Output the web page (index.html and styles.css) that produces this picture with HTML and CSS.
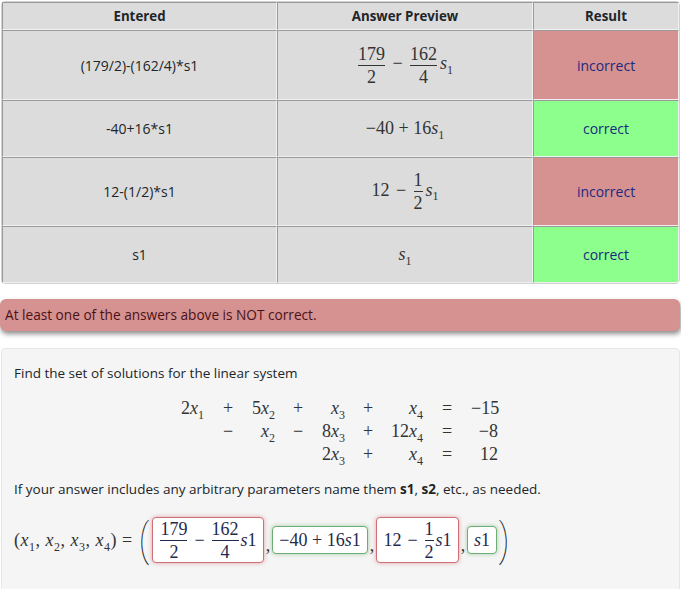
FILE: index.html
```html
<!DOCTYPE html>
<html lang="en">

<head>
  <meta charset="UTF-8" />
  <title>Attempt Results</title>
  <link rel="stylesheet" href="styles.css">
</head>

<body>
  <table class="results">
    <colgroup>
      <col class="col-entered">
      <col class="col-preview">
      <col class="col-result">
    </colgroup>
    <tr class="row-head">
      <th>Entered</th>
      <th>Answer Preview</th>
      <th>Result</th>
    </tr>
    <tr class="row-tall">
      <td>(179/2)-(162/4)*s1</td>
      <td class="math">
        <span class="frac"><span>179</span><span>2</span></span>
        <span class="op">&minus;</span>
        <span class="frac"><span>162</span><span>4</span></span><i class="sym">s</i><sub>1</sub>
      </td>
      <td class="bad">incorrect</td>
    </tr>
    <tr class="row-short">
      <td>-40+16*s1</td>
      <td class="math">&minus;40 + 16<i>s</i><sub>1</sub></td>
      <td class="good">correct</td>
    </tr>
    <tr class="row-mid">
      <td>12-(1/2)*s1</td>
      <td class="math">12 <span class="op">&minus;</span>
        <span class="frac"><span>1</span><span>2</span></span><i class="sym">s</i><sub>1</sub>
      </td>
      <td class="bad">incorrect</td>
    </tr>
    <tr class="row-short">
      <td>s1</td>
      <td class="math"><i>s</i><sub>1</sub></td>
      <td class="good">correct</td>
    </tr>
  </table>

  <div class="alert">At least one of the answers above is NOT correct.</div>

  <div class="problem">
    <p class="intro">Find the set of solutions for the linear system</p>

    <div class="system">
      <span>2<i>x</i><sub>1</sub></span><span class="c">+</span><span>5<i>x</i><sub>2</sub></span><span class="c">+</span><span><i>x</i><sub>3</sub></span><span class="c">+</span><span><i>x</i><sub>4</sub></span><span class="c">=</span><span>&minus;15</span>
      <span></span><span class="c">&minus;</span><span><i>x</i><sub>2</sub></span><span class="c">&minus;</span><span>8<i>x</i><sub>3</sub></span><span class="c">+</span><span>12<i>x</i><sub>4</sub></span><span class="c">=</span><span>&minus;8</span>
      <span></span><span></span><span></span><span></span><span>2<i>x</i><sub>3</sub></span><span class="c">+</span><span><i>x</i><sub>4</sub></span><span class="c">=</span><span>12</span>
    </div>

    <p class="note">If your answer includes any arbitrary parameters name them <b>s1</b>, <b>s2</b>, etc., as needed.</p>

    <div class="answer">
      <span class="lhs">(<i>x</i><sub>1</sub>, <i>x</i><sub>2</sub>, <i>x</i><sub>3</sub>, <i>x</i><sub>4</sub>) =</span>
      <span class="paren">(</span>
      <span class="box box-bad box-wide">
        <span class="frac"><span>179</span><span>2</span></span>
        <span class="op">&minus;</span>
        <span class="frac"><span>162</span><span>4</span></span><span class="var"><i>s</i>1</span>
      </span>
      <span class="comma">,</span>
      <span class="box box-good box-line">&minus;40 + 16<i>s</i>1</span>
      <span class="comma">,</span>
      <span class="box box-bad box-mid">12<span class="op">&minus;</span><span class="frac"><span>1</span><span>2</span></span><span class="var"><i>s</i>1</span>
      </span>
      <span class="comma">,</span>
      <span class="box box-good box-one"><i>s</i>1</span>
      <span class="paren">)</span>
    </div>
  </div>
</body>

</html>
```

FILE: styles.css
```css
body {
  margin: 0;
  background-color: #fff;
  color: #212529;
  font-family: "Open Sans", sans-serif;
  font-size: 13.65px;
  overflow: hidden;
}

.results {
  width: 679px;
  margin: 1px 0 0 1px;
  table-layout: fixed;
  border-collapse: separate;
  border-spacing: 0;
  border: 1px solid #d0d0d0;
  border-radius: 4px;
  background-color: #fff;
  font-size: 14px;
}

.col-entered {
  width: 275px;
}

.col-preview {
  width: 256px;
}

.results th,
.results td {
  padding: 0;
  text-align: center;
  background-color: #dcdcdc;
  border: 1px solid;
  border-color: #9a9a9a #f0f0f0 #f0f0f0 #9a9a9a;
}

.results th {
  font-weight: 700;
  font-size: 13.3px;
  padding-bottom: 1px;
}

.row-head {
  height: 28px;
}

.row-tall {
  height: 70px;
}

.row-short {
  height: 57px;
}

.row-mid {
  height: 69px;
}

.results .bad {
  background-color: #d69191;
  color: #1b2a80;
}

.results .good {
  background-color: #8cff8c;
  color: #1b2a80;
}

.math,
.system,
.lhs,
.box,
.comma {
  font-family: "Liberation Serif", serif;
}

.results .math {
  font-size: 18px;
  color: #333;
}

.math sub,
.system sub,
.lhs sub {
  font-size: 12px;
  line-height: 0;
}

.frac {
  display: inline-flex;
  flex-direction: column;
  vertical-align: middle;
  text-align: center;
  line-height: 22px;
  margin: 0 1px;
}

.frac span:first-child {
  border-bottom: 1px solid currentColor;
}

.op {
  margin: 0 2px;
}

.sym {
  margin-left: 2px;
}

.alert {
  height: 32px;
  margin-top: 15px;
  padding-left: 5px;
  line-height: 32px;
  width: 675px;
  background-color: #d69191;
  color: #4a1216;
  border-radius: 6px;
  box-shadow: 1px 3px 5px rgba(0, 0, 0, 0.45);
}

.problem {
  margin: 17px 0 0 1px;
  width: 679px;
  height: 260px;
  box-sizing: border-box;
  padding: 14px 12px;
  background-color: #f5f5f5;
  border: 1px solid #e6e6e6;
  border-radius: 4px;
  font-size: 13.5px;
}

.problem p {
  margin: 0;
  line-height: 20px;
}

.system {
  display: grid;
  grid-template-columns: 23px 48px 23px 46px 24px 46px 32px 48px 27px;
  grid-auto-rows: 23px;
  margin: 14px 0 0 167px;
  font-size: 18px;
  line-height: 23px;
  color: #333;
  text-align: right;
}

.system .c {
  text-align: center;
}

.note {
  margin-top: 13px !important;
}

.answer {
  display: flex;
  align-items: center;
  margin-top: 18px;
  font-size: 18px;
  color: #333;
}

.lhs {
  white-space: nowrap;
  width: 123px;
  letter-spacing: 0.5px;
}

.paren {
  width: 14px;
  font-family: Roboto, sans-serif;
  font-weight: 100;
  font-size: 44px;
  line-height: 46px;
  text-align: center;
  color: #222;
  transform: scaleX(0.8);
}

.box {
  display: inline-flex;
  align-items: center;
  justify-content: center;
  box-sizing: border-box;
  white-space: pre;
  background-color: #fff;
  color: #1f2b4d;
  border-radius: 4px;
}

.box .op {
  margin: 0 6px;
}

.box-bad {
  height: 46px;
  border: 1px solid #cf6f73;
  box-shadow: 0 0 4px rgba(207, 111, 115, 0.6);
}

.box-good {
  height: 28px;
  border: 1px solid #6fae72;
  box-shadow: 0 0 4px rgba(111, 174, 114, 0.6);
}

.box-wide {
  width: 112px;
  margin-left: 1px;
}

.box-line {
  width: 96px;
}

.box-mid {
  width: 83px;
}

.box-one {
  width: 30px;
}

.var {
  margin-left: 1px;
}

.comma {
  width: 8px;
  text-align: center;
  align-self: center;
  margin-top: 10px;
}
```
